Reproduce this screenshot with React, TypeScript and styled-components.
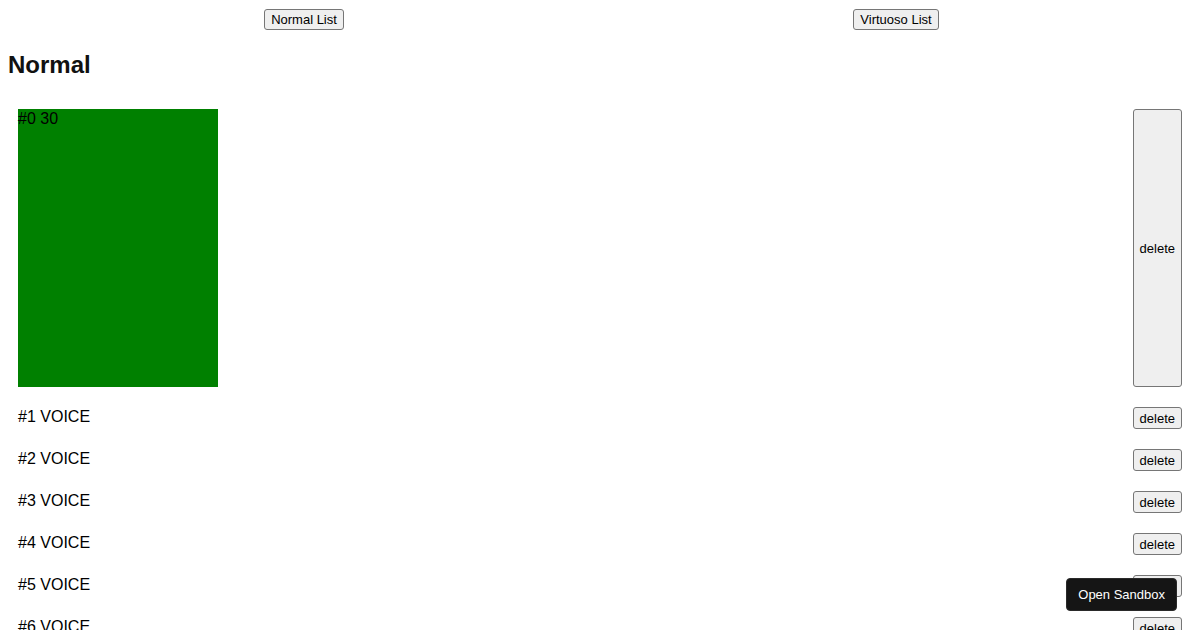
import styled, { createGlobalStyle } from 'styled-components';

const GlobalStyle = createGlobalStyle`
  body {
    margin: 8px;
    font-family: "Liberation Sans", Arial, sans-serif;
    color: #000;
    background: #fff;
  }
`;

const voices = [1, 2, 3, 4, 5, 6, 7, 8, 9, 10];

const App = () => {
  return (
    <>
      <GlobalStyle />
      <TopBar>
        <Half><PlainButton>Normal List</PlainButton></Half>
        <Half><PlainButton>Virtuoso List</PlainButton></Half>
      </TopBar>
      <Title>Normal</Title>
      <List>
        <Row>
          <Media>#0 30</Media>
          <PlainButton>delete</PlainButton>
        </Row>
        {voices.map((n) => (
          <Row key={n}>
            <Label>#{n} VOICE</Label>
            <PlainButton>delete</PlainButton>
          </Row>
        ))}
      </List>
      <SandboxButton>Open Sandbox</SandboxButton>
    </>
  );
};

const TopBar = styled.div`
  display: flex;
`;

const Half = styled.div`
  flex: 1;
  display: flex;
  justify-content: center;
  padding-top: 1px;
`;

const PlainButton = styled.button`
  font-family: "Liberation Sans", Arial, sans-serif;
  font-size: 13px;
  color: #000;
  background: #efefef;
  border: 1px solid #767676;
  border-radius: 3px;
  padding: 1px 6px;
  min-height: 21px;
`;

const Title = styled.h2`
  font-size: 24px;
  font-weight: bold;
  color: #111;
  margin: 21px 0 20px;
`;

const List = styled.div`
  display: flex;
  flex-direction: column;
`;

const Row = styled.div`
  display: flex;
  justify-content: space-between;
  padding: 10px;
  min-height: 22px;
`;

const Media = styled.div`
  width: 200px;
  height: 278px;
  background: green;
  font-size: 16px;
  line-height: 20px;
`;

const Label = styled.div`
  font-size: 16px;
  line-height: 20px;
`;

const SandboxButton = styled.button`
  position: fixed;
  right: 23px;
  bottom: 19px;
  height: 33px;
  padding: 0 11px;
  font-family: "Liberation Sans", Arial, sans-serif;
  font-size: 13px;
  color: #fff;
  background: #151515;
  border: 1px solid #2a2a2a;
  border-radius: 4px;
`;

export default App;
